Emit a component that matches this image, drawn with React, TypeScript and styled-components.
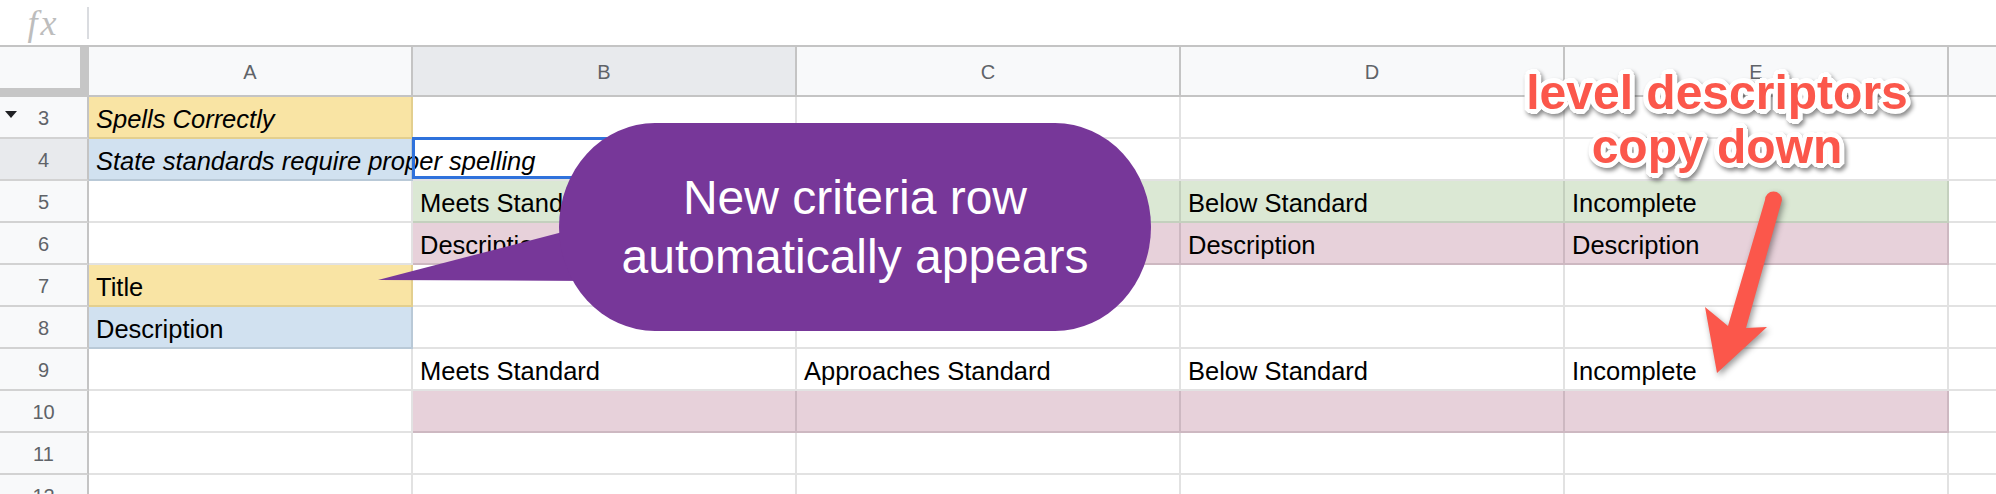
import styled, { createGlobalStyle } from "styled-components";

const GlobalStyle = createGlobalStyle`
  html, body {
    margin: 0;
    padding: 0;
    background: #ffffff;
  }
  body {
    font-family: "Liberation Sans", Arial, sans-serif;
    overflow: hidden;
  }
`;

const COLS = "89px 324px 384px 384px 384px 384px 1fr";

type Tone = "yellow" | "blue" | "green" | "pink";

const tones: Record<Tone, { bg: string; line: string }> = {
  yellow: { bg: "#f9e4a4", line: "#e3cf8e" },
  blue: { bg: "#d1e1f0", line: "#b9c9d7" },
  green: { bg: "#dbe8d4", line: "#c4d0be" },
  pink: { bg: "#e7d1da", line: "#cdb8c1" },
};

const Page = styled.div`
  position: relative;
  width: 1996px;
  height: 494px;
  overflow: hidden;
  background: #ffffff;
`;

const FormulaBar = styled.div`
  display: flex;
  align-items: center;
  height: 47px;
  box-sizing: border-box;
  border-bottom: 2px solid #c4c4c4;
`;

const FxIcon = styled.div`
  width: 87px;
  text-align: center;
  font-family: "Liberation Serif", "Times New Roman", serif;
  font-style: italic;
  font-size: 36px;
  line-height: 40px;
  letter-spacing: 3px;
  color: #bdbdbd;
`;

const Divider = styled.div`
  width: 2px;
  height: 32px;
  background: #dadce0;
`;

const HeaderRow = styled.div`
  display: grid;
  grid-template-columns: ${COLS};
  height: 50px;
`;

const Corner = styled.div`
  box-sizing: border-box;
  background: #f8f9fa;
  border-right: 9px solid #c6c6c6;
  border-bottom: 9px solid #c6c6c6;
`;

const ColHeader = styled.div<{ $active?: boolean; $last?: boolean }>`
  display: flex;
  align-items: center;
  justify-content: center;
  box-sizing: border-box;
  padding-top: 2px;
  background: ${(p) => (p.$active ? "#e8eaed" : "#f8f9fa")};
  border-right: ${(p) => (p.$last ? "none" : "2px solid #c4c4c4")};
  border-bottom: 2px solid #c4c4c4;
  color: #5f6368;
  font-size: 20px;
`;

const Row = styled.div`
  display: grid;
  grid-template-columns: ${COLS};
  height: 42px;
`;

const RowHeader = styled.div<{ $active?: boolean }>`
  display: grid;
  grid-template-columns: 22px 1fr 22px;
  align-items: center;
  box-sizing: border-box;
  padding-top: 3px;
  background: ${(p) => (p.$active ? "#e8eaed" : "#f8f9fa")};
  border-right: 2px solid #c4c4c4;
  border-bottom: 2px solid #d2d2d2;
  color: #5f6368;
  font-size: 20px;
`;

const RowNumber = styled.span`
  grid-column: 2;
  text-align: center;
`;

const Toggle = styled.span`
  grid-column: 1;
  justify-self: center;
  margin-top: -8px;
  width: 0;
  height: 0;
  border-left: 6px solid transparent;
  border-right: 6px solid transparent;
  border-top: 7px solid #202124;
`;

const Cell = styled.div<{ $tone?: Tone; $italic?: boolean; $selected?: boolean; $last?: boolean }>`
  position: ${(p) => (p.$selected ? "relative" : "static")};
  display: flex;
  align-items: center;
  box-sizing: border-box;
  min-width: 0;
  padding: 4px 0 0 7px;
  background: ${(p) => (p.$tone ? tones[p.$tone].bg : "transparent")};
  border-right: ${(p) => (p.$last ? "none" : `2px solid ${p.$tone ? tones[p.$tone].line : "#e2e2e2"}`)};
  border-bottom: 2px solid ${(p) => (p.$tone ? tones[p.$tone].line : "#e2e2e2")};
  font-size: 25.5px;
  font-style: ${(p) => (p.$italic ? "italic" : "normal")};
  color: #000000;
  white-space: nowrap;
  overflow: visible;

  ${(p) =>
    p.$selected &&
    `
    &::after {
      content: "";
      position: absolute;
      top: -2px;
      left: -1px;
      right: -1px;
      bottom: 0;
      border: 3px solid #2f72dc;
      pointer-events: none;
    }
  `}
`;

const Callout = styled.div`
  position: absolute;
  left: 378px;
  top: 123px;
  width: 773px;
  height: 208px;
  display: flex;
  justify-content: flex-end;
`;

const Tail = styled.svg`
  position: absolute;
  left: 0;
  top: 0;
`;

const Bubble = styled.div`
  position: relative;
  width: 592px;
  height: 208px;
  border-radius: 96px / 104px;
  background: #773799;
  display: flex;
  align-items: center;
  justify-content: center;
  text-align: center;
  color: #ffffff;
  font-size: 48px;
  line-height: 59px;
`;

const white = "#ffffff";
const outline = [
  [4, 0], [-4, 0], [0, 4], [0, -4],
  [3, 3], [-3, 3], [3, -3], [-3, -3],
  [4, 2], [-4, 2], [4, -2], [-4, -2],
  [2, 4], [-2, 4], [2, -4], [-2, -4],
  [5, 1], [-5, 1], [1, 5], [1, -5],
]
  .map(([x, y]) => `${x}px ${y}px 0 ${white}`)
  .join(", ");

const Label = styled.div`
  position: absolute;
  left: 1507px;
  top: 66px;
  width: 420px;
  text-align: center;
  font-weight: 700;
  font-size: 48px;
  line-height: 54px;
  color: #fb574b;
  text-shadow: ${outline};
  filter: drop-shadow(2px 3px 2px rgba(0, 0, 0, 0.45));
`;

const Arrow = styled.svg`
  position: absolute;
  left: 1690px;
  top: 180px;
  filter: drop-shadow(2px 3px 3px rgba(0, 0, 0, 0.4));
`;

type CellSpec = { t?: string; tone?: Tone; i?: boolean; selected?: boolean };
type RowSpec = { n: number; toggle?: boolean; active?: boolean; cells?: CellSpec[] };

const levels = ["Meets Standard", "Approaches Standard", "Below Standard", "Incomplete"];

const rows: RowSpec[] = [
  { n: 3, toggle: true, cells: [{ t: "Spells Correctly", tone: "yellow", i: true }] },
  {
    n: 4,
    active: true,
    cells: [{ t: "State standards require proper spelling", tone: "blue", i: true }, { selected: true }],
  },
  { n: 5, cells: [{}, ...levels.map((t) => ({ t, tone: "green" as Tone }))] },
  { n: 6, cells: [{}, ...levels.map(() => ({ t: "Description", tone: "pink" as Tone }))] },
  { n: 7, cells: [{ t: "Title", tone: "yellow" }] },
  { n: 8, cells: [{ t: "Description", tone: "blue" }] },
  { n: 9, cells: [{}, ...levels.map((t) => ({ t }))] },
  { n: 10, cells: [{}, ...levels.map(() => ({ tone: "pink" as Tone }))] },
  { n: 11 },
  { n: 12 },
];

const columns = ["A", "B", "C", "D", "E", ""];

export default function App() {
  return (
    <>
      <GlobalStyle />
      <Page>
        <FormulaBar>
          <FxIcon>fx</FxIcon>
          <Divider />
        </FormulaBar>

        <HeaderRow>
          <Corner />
          {columns.map((c, i) => (
            <ColHeader key={i} $active={c === "B"} $last={i === columns.length - 1}>
              {c}
            </ColHeader>
          ))}
        </HeaderRow>

        {rows.map((row) => (
          <Row key={row.n}>
            <RowHeader $active={row.active}>
              {row.toggle && <Toggle />}
              <RowNumber>{row.n}</RowNumber>
            </RowHeader>
            {columns.map((_, ci) => {
              const spec = row.cells?.[ci] ?? {};
              return (
                <Cell
                  key={ci}
                  $tone={spec.tone}
                  $italic={spec.i}
                  $selected={spec.selected}
                  $last={ci === columns.length - 1}
                >
                  {spec.t}
                </Cell>
              );
            })}
          </Row>
        ))}

        <Callout>
          <Tail width="773" height="208" viewBox="0 0 773 208">
            <polygon points="0,157 200,105 215,158" fill="#773799" />
          </Tail>
          <Bubble>
            New criteria row
            <br />
            automatically appears
          </Bubble>
        </Callout>

        <Label>
          level descriptors
          <br />
          copy down
        </Label>

        <Arrow width="110" height="210" viewBox="0 0 110 210">
          <path
            d="M75,20 A8.5,8.5 0 0 1 92,20 L56,148 L77,147 L27,193 L15,127 L38,146 Z"
            fill="#fb574b"
          />
        </Arrow>
      </Page>
    </>
  );
}
